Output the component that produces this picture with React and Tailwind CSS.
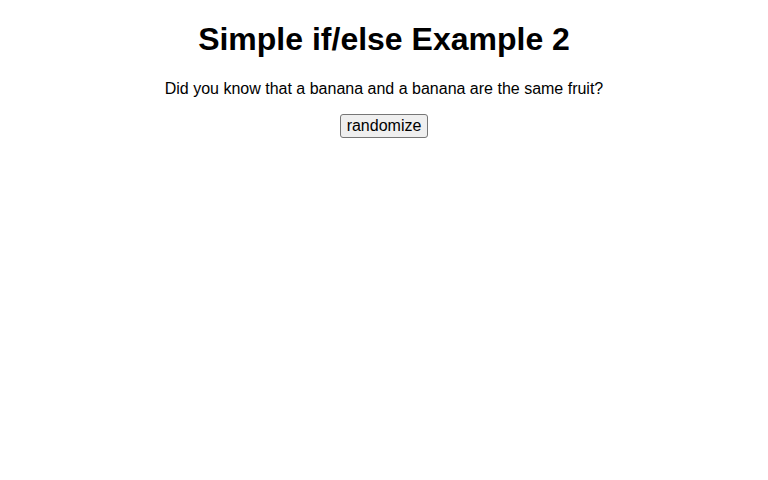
import React, { useState } from 'react';

const fruits = ['banana', 'apple', 'orange', 'mango'];

const App = () => {
  const [pair, setPair] = useState(['banana', 'banana']);

  const randomize = () => {
    const pick = () => fruits[Math.floor(Math.random() * fruits.length)];
    setPair([pick(), pick()]);
  };

  const same = pair[0] === pair[1];

  return (
    <div className="min-h-screen bg-white px-2 text-center text-black font-['Liberation_Sans',Arial,sans-serif] text-base leading-[normal]">
      <h1 className="pt-[21px] pb-[22px] text-[32px] font-bold leading-[normal]">Simple if/else Example 2</h1>
      {same ? (
        <p className="mb-4">Did you know that a {pair[0]} and a {pair[1]} are the same fruit?</p>
      ) : (
        <p className="mb-4">Did you know that a {pair[0]} and a {pair[1]} are different fruits?</p>
      )}
      <button
        onClick={randomize}
        className="h-[24px] rounded-[3px] border border-[#767676] bg-[#efefef] px-[6px] text-base leading-[normal] hover:bg-[#e5e5e5]"
      >
        randomize
      </button>
    </div>
  );
};

export default App;
